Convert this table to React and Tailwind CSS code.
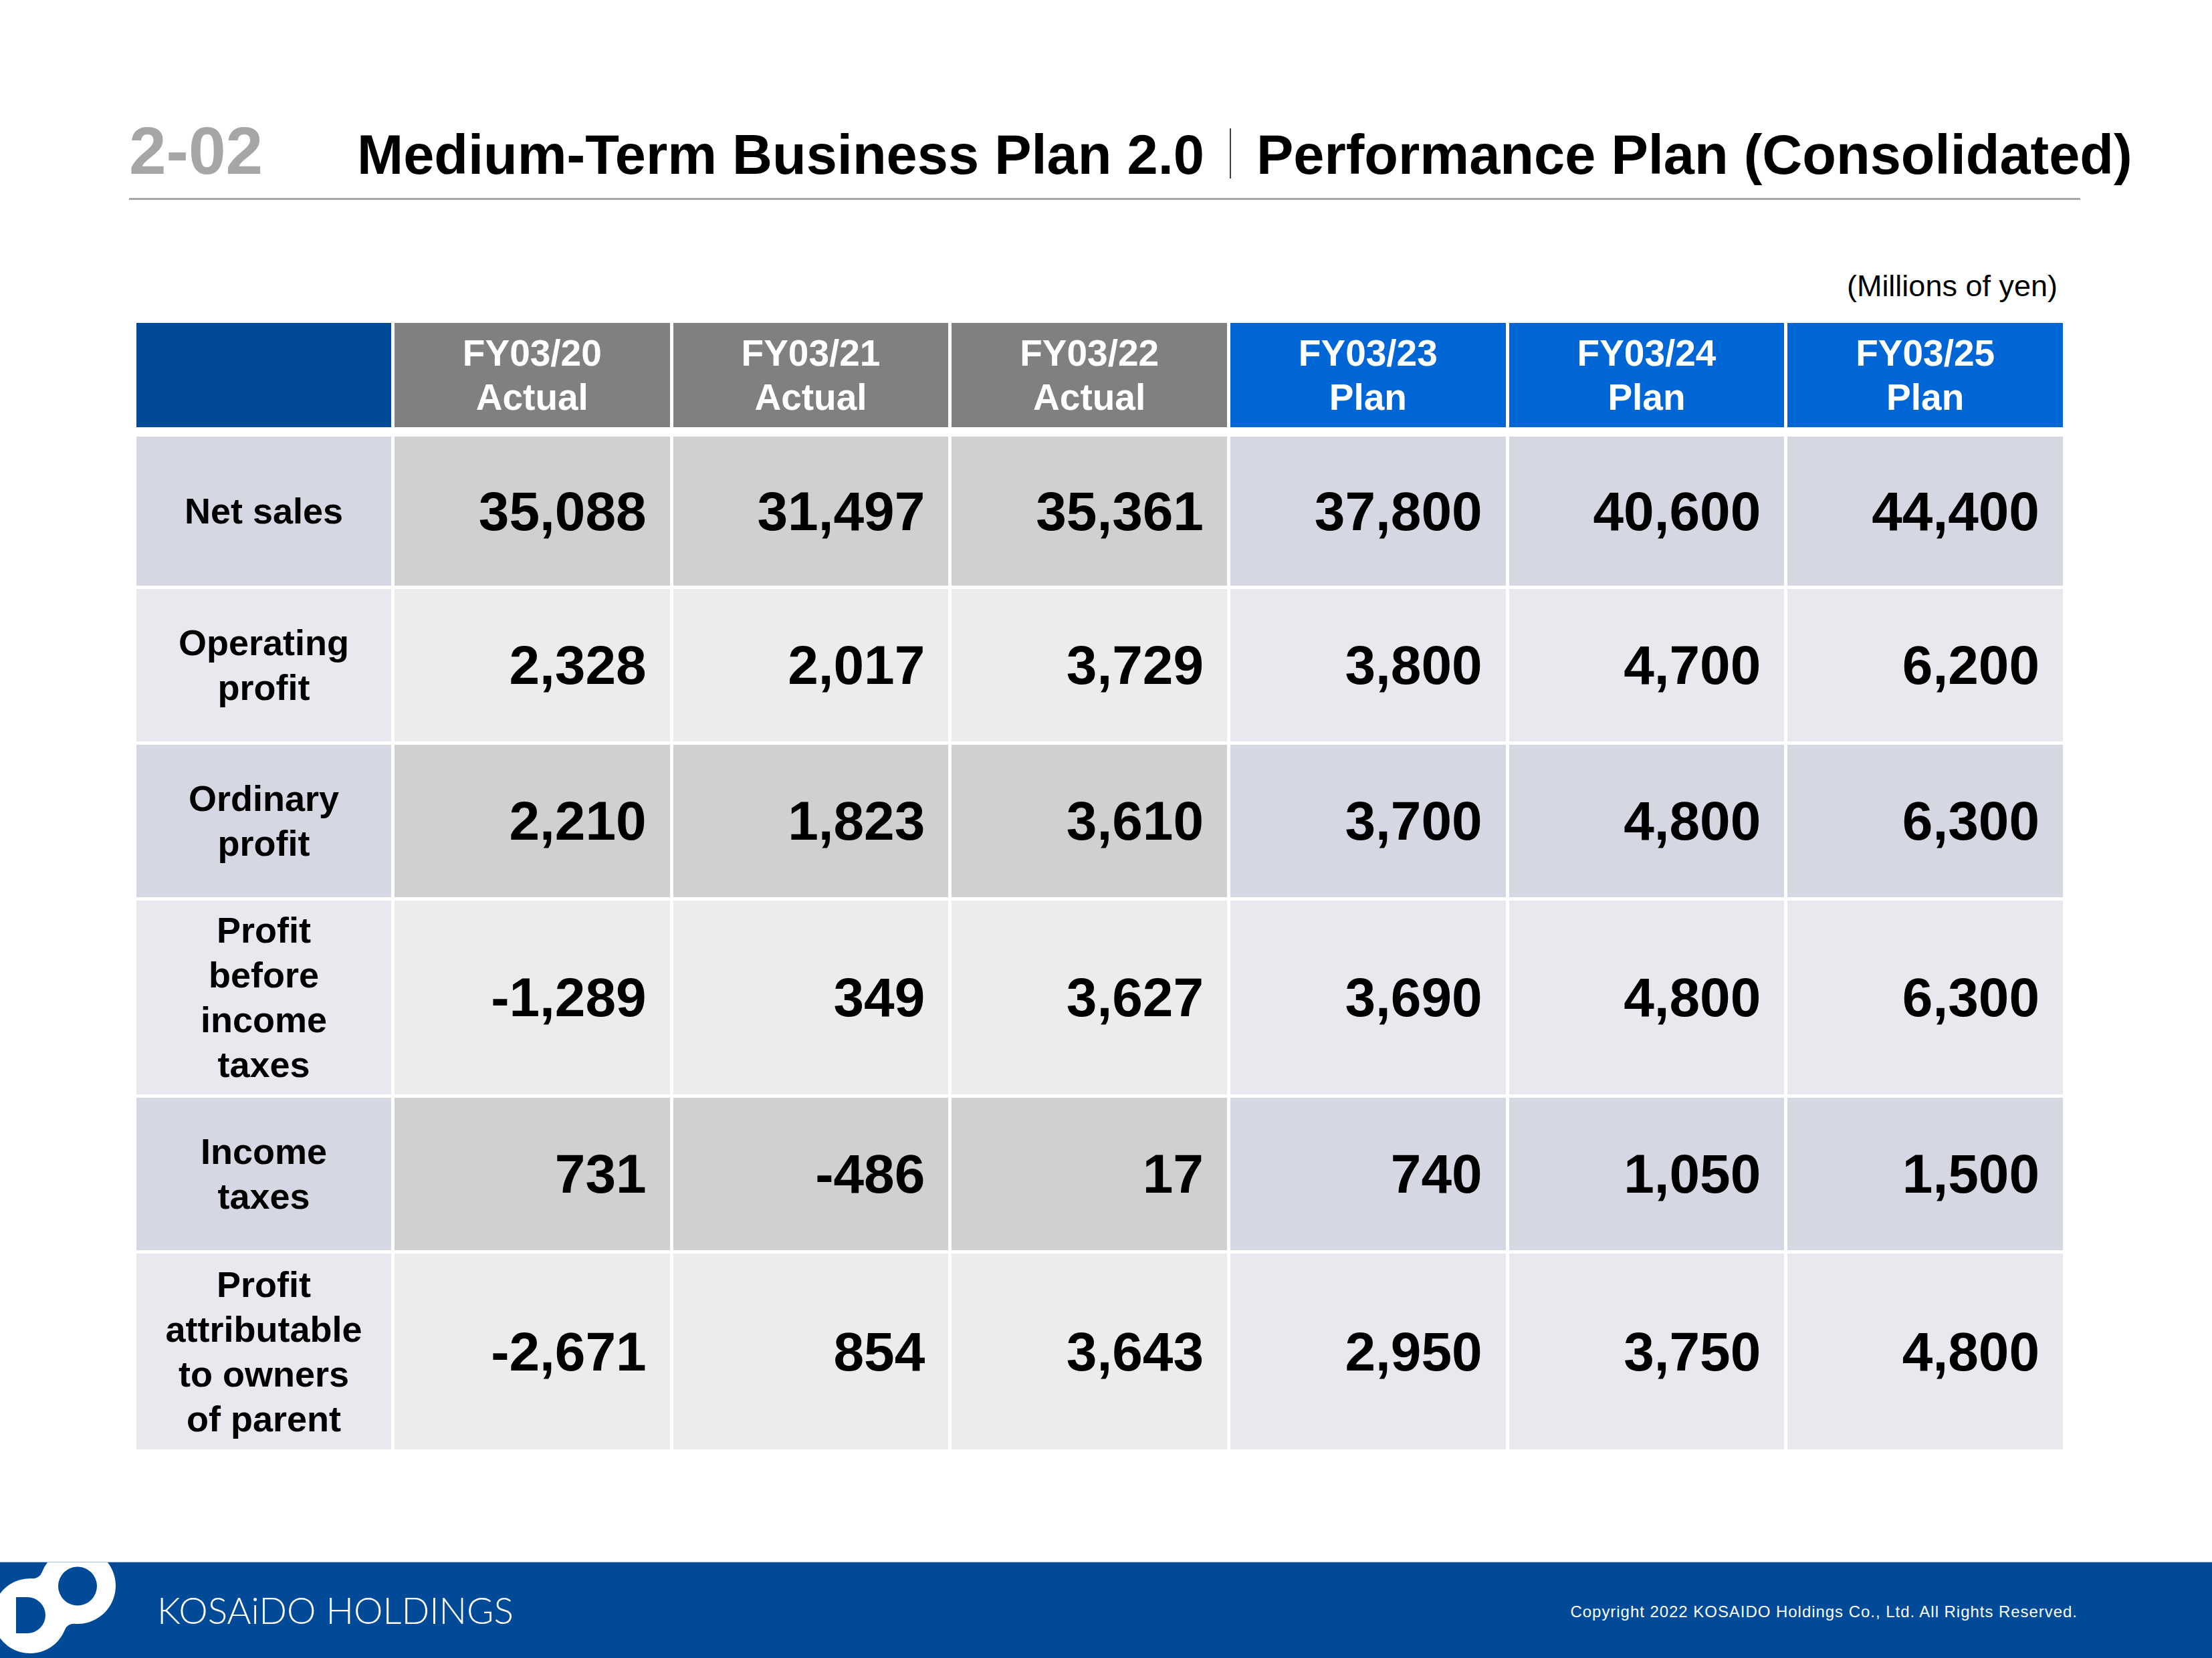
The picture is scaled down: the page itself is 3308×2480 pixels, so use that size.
import React from 'react';

const years = [
  { fy: 'FY03/20', kind: 'Actual' },
  { fy: 'FY03/21', kind: 'Actual' },
  { fy: 'FY03/22', kind: 'Actual' },
  { fy: 'FY03/23', kind: 'Plan' },
  { fy: 'FY03/24', kind: 'Plan' },
  { fy: 'FY03/25', kind: 'Plan' },
];

const rows = [
  { label: ['Net sales'], values: ['35,088', '31,497', '35,361', '37,800', '40,600', '44,400'], h: 'h-[223px]' },
  { label: ['Operating', 'profit'], values: ['2,328', '2,017', '3,729', '3,800', '4,700', '6,200'], h: 'h-[228px]' },
  { label: ['Ordinary', 'profit'], values: ['2,210', '1,823', '3,610', '3,700', '4,800', '6,300'], h: 'h-[228px]' },
  { label: ['Profit', 'before', 'income', 'taxes'], values: ['-1,289', '349', '3,627', '3,690', '4,800', '6,300'], h: 'h-[290px]' },
  { label: ['Income', 'taxes'], values: ['731', '-486', '17', '740', '1,050', '1,500'], h: 'h-[228px]' },
  { label: ['Profit', 'attributable', 'to owners', 'of parent'], values: ['-2,671', '854', '3,643', '2,950', '3,750', '4,800'], h: 'h-[293px]' },
];

const Logo = () => (
  <svg width="180" height="143" viewBox="0 0 180 143" className="shrink-0 self-start">
    <path
      d="M48.6 24.1 A14 14 0 0 0 62.6 15 A57 57 0 1 1 111.3 91.8 A14 14 0 0 0 97.1 100.6 A56 56 0 1 1 48.6 24.1 Z"
      fill="#ffffff"
    />
    <circle cx="116" cy="35.5" r="29" fill="#004a98" />
    <path d="M24 52 H41 A27 27 0 0 1 41 106 H24 Z" fill="#004a98" />
  </svg>
);

const App = () => {
  return (
    <div className="w-[3308px] h-[2480px] bg-white flex flex-col overflow-hidden font-['Liberation_Sans',Arial,sans-serif] text-black">
      {/* title */}
      <div className="ml-[193px] w-[2918px] pt-[175px] pb-[21px] flex items-baseline whitespace-nowrap border-b-[3px] border-[#a6a6a6]">
        <span className="shrink-0 w-[341px] text-[100px] leading-none font-bold text-[#a6a6a6]">2-02</span>
        <span className="shrink-0 text-[83px] leading-none font-bold">Medium-Term Business Plan 2.0</span>
        <span className="shrink-0 self-start mt-[17px] ml-[38px] mr-[38px] w-[2px] h-[75px] bg-[#3f3f3f]" />
        <span className="shrink-0 text-[83px] leading-none font-bold">Performance Plan (Consolidated)</span>
      </div>

      <div className="ml-[204px] w-[2881px] mt-[106px] pr-[8px] text-right text-[45px] leading-none">
        (Millions of yen)
      </div>

      {/* table */}
      <div className="ml-[204px] w-[2881px] mt-[33px]">
        <div className="grid grid-cols-[381px_repeat(6,1fr)] gap-x-[5px] h-[156px]">
          <div className="bg-[#004a98]" />
          {years.map((y) => (
            <div
              key={y.fy}
              className={`flex flex-col items-center justify-center text-white font-bold text-[55px] leading-[66px] ${
                y.kind === 'Plan' ? 'bg-[#0066d6]' : 'bg-[#808080]'
              }`}
            >
              <span>{y.fy}</span>
              <span>{y.kind}</span>
            </div>
          ))}
        </div>

        <div className="mt-[14px] flex flex-col gap-y-[5px]">
          {rows.map((row, i) => {
            const odd = i % 2 === 0;
            return (
              <div key={row.label.join(' ')} className={`grid grid-cols-[381px_repeat(6,1fr)] gap-x-[5px] ${row.h}`}>
                <div
                  className={`flex flex-col items-center justify-center text-center font-bold text-[54px] leading-[67px] ${
                    odd ? 'bg-[#d5d8e3]' : 'bg-[#e8e9ee]'
                  }`}
                >
                  {row.label.map((line) => (
                    <span key={line}>{line}</span>
                  ))}
                </div>
                {row.values.map((v, j) => {
                  const plan = j >= 3;
                  const bg = plan
                    ? odd
                      ? 'bg-[#d5d8e3]'
                      : 'bg-[#e8e9ee]'
                    : odd
                    ? 'bg-[#d0d0d0]'
                    : 'bg-[#ececec]';
                  return (
                    <div key={j} className={`flex items-center justify-end pr-[35px] font-bold text-[82px] leading-none ${bg}`}>
                      {v}
                    </div>
                  );
                })}
              </div>
            );
          })}
        </div>
      </div>

      {/* footer */}
      <div className="mt-auto h-[144px] bg-[#004a98] border-t border-[#a8bfdc] flex items-center">
        <Logo />
        <span className="ml-[55px] font-['Lato',sans-serif] font-light text-[55px] leading-none text-white">
          KOSAiDO HOLDINGS
        </span>
        <span className="ml-auto mr-[201px] pt-[5px] text-[24px] leading-none tracking-[0.04em] text-white">
          Copyright 2022 KOSAIDO Holdings Co., Ltd. All Rights Reserved.
        </span>
      </div>
    </div>
  );
};

export default App;
